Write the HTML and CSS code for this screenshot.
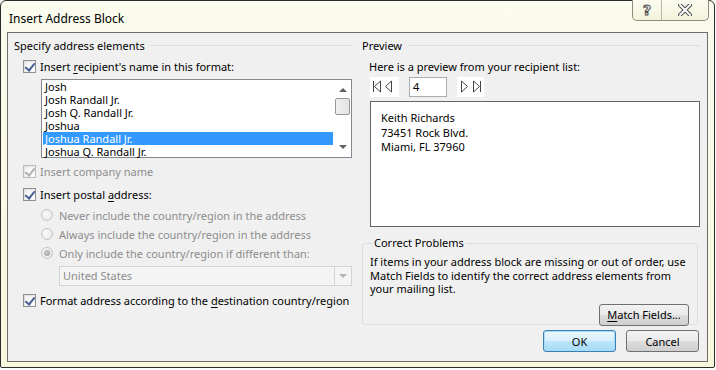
FILE: index.html
```html
<!DOCTYPE html>
<html lang="en">

<head>
    <meta charset="UTF-8">
    <title>Insert Address Block</title>
    <link rel="stylesheet" href="styles.css">
</head>

<body>
    <div class="window">
        <div class="titlebar">
            <span class="title">Insert Address Block</span>
            <div class="capBtns">
                <div class="capBtn help">?</div>
                <div class="capBtn close">
                    <svg width="14" height="12" viewBox="0 0 14 12">
                        <path d="M2 1 L12 11 M12 1 L2 11" stroke="#4a4a4a" stroke-width="4" stroke-linecap="square" />
                        <path d="M2 1 L12 11 M12 1 L2 11" stroke="#fff" stroke-width="2" stroke-linecap="square" />
                    </svg>
                </div>
            </div>
        </div>

        <div class="client">
            <section class="col left">
                <div class="grpHead"><span>Specify address elements</span><i></i></div>

                <label class="row cbRow first">
                    <span class="cb on"></span>
                    <span>Insert <u>r</u>ecipient's name in this format:</span>
                </label>

                <div class="listbox">
                    <ul class="items">
                        <li>Josh</li>
                        <li>Josh Randall Jr.</li>
                        <li>Josh Q. Randall Jr.</li>
                        <li>Joshua</li>
                        <li class="sel">Joshua Randall Jr.</li>
                        <li>Joshua Q. Randall Jr.</li>
                    </ul>
                    <div class="vscroll">
                        <span class="arrUp"></span>
                        <span class="thumb"></span>
                        <span class="arrDown"></span>
                    </div>
                </div>

                <label class="row cbRow company disabled">
                    <span class="cb on dis"></span>
                    <span>Insert company name</span>
                </label>

                <label class="row cbRow postal">
                    <span class="cb on"></span>
                    <span>Insert postal <u>a</u>ddress:</span>
                </label>

                <label class="row radioRow r1 disabled">
                    <span class="radio"></span>
                    <span>Never include the country/region in the address</span>
                </label>
                <label class="row radioRow r2 disabled">
                    <span class="radio"></span>
                    <span>Always include the country/region in the address</span>
                </label>
                <label class="row radioRow r3 disabled">
                    <span class="radio on"></span>
                    <span>Only include the country/region if different than:</span>
                </label>

                <div class="combo">
                    <span class="comboText">United States</span>
                    <span class="comboBtn"><span class="arrDown grey"></span></span>
                </div>

                <label class="row cbRow fmt">
                    <span class="cb on"></span>
                    <span>Format address according to the <u>d</u>estination country/region</span>
                </label>
            </section>

            <section class="col right">
                <div class="grpHead"><span>Preview</span><i></i></div>

                <div class="row hereText">Here is a preview from your recipient list:</div>

                <div class="nav">
                    <div class="navPair">
                        <svg width="29" height="20" viewBox="0 0 29 20">
                            <path d="M3.5 4 V15 M10.5 4 L4.5 9.5 L10.5 15 Z" fill="none" stroke="#444" />
                            <path d="M21.5 4 L15.5 9.5 L21.5 15 Z" fill="none" stroke="#444" />
                        </svg>
                    </div>
                    <div class="recInput">4</div>
                    <div class="navPair">
                        <svg width="27" height="20" viewBox="0 0 27 20">
                            <path d="M4.5 4 L10.5 9.5 L4.5 15 Z" fill="none" stroke="#444" />
                            <path d="M16.5 4 L22.5 9.5 L16.5 15 Z M23.5 4 V15" fill="none" stroke="#444" />
                        </svg>
                    </div>
                </div>

                <div class="preview">
                    <div>Keith Richards</div>
                    <div>73451 Rock Blvd.</div>
                    <div>Miami, FL 37960</div>
                </div>

                <fieldset class="problems">
                    <legend>Correct Problems</legend>
                    <p>If items in your address block are missing or out of order, use Match Fields to identify the correct address elements from your mailing list.</p>
                    <div class="btnRow">
                        <button class="btn match"><u>M</u>atch Fields...</button>
                    </div>
                </fieldset>

                <div class="btnRow dlgBtns">
                    <button class="btn ok">OK</button>
                    <button class="btn">Cancel</button>
                </div>
            </section>
        </div>
    </div>
</body>

</html>
```

FILE: styles.css
```css
* {
    box-sizing: border-box;
    margin: 0;
    padding: 0;
}

body {
    width: 716px;
    height: 370px;
    background: #fff;
    font-family: 'Noto Sans', 'Open Sans', sans-serif;
    font-size: 11px;
    color: #000;
}

u {
    text-decoration: underline;
    text-underline-offset: 2px;
}

.window {
    width: 715px;
    height: 368px;
    border: 1px solid #2b2b2b;
    border-radius: 6px 6px 2px 2px;
    background: linear-gradient(180deg, #fbfbee 0%, #f7f8dc 100%);
    padding: 0 6px 5px 6px;
    display: flex;
    flex-direction: column;
}

.titlebar {
    height: 31px;
    display: flex;
    justify-content: space-between;
    align-items: flex-start;
}

.title {
    font-size: 12px;
    margin: 9px 0 0 2px;
}

.capBtns {
    display: flex;
    height: 21px;
    margin-top: -1px;
    margin-right: -1px;
    border: 1px solid #8c8c80;
    border-top: none;
    border-radius: 0 0 5px 5px;
    background: linear-gradient(180deg, #fbfbef, #f3f4dc);
}

.capBtn {
    display: flex;
    align-items: center;
    justify-content: center;
}

.help {
    width: 29px;
    border-right: 1px solid #b5b5a8;
    font-family: 'DejaVu Sans', sans-serif;
    font-weight: bold;
    font-size: 14px;
    color: #fff;
    -webkit-text-stroke: 1px #4a4a4a;
}

.close {
    width: 46px;
}

.client {
    flex: 1;
    border: 1px solid #6d6d6d;
    background: #f0f0f0;
    display: grid;
    grid-template-columns: 338px 338px;
    column-gap: 10px;
    padding: 5px 0 0 6px;
}

.col {
    display: flex;
    flex-direction: column;
}

.grpHead {
    height: 14px;
    display: flex;
    align-items: center;
    color: #000;
}

.grpHead i {
    flex: 1;
    height: 1px;
    margin-left: 6px;
    background: #d5dfe5;
}

.row {
    display: flex;
    align-items: center;
    height: 16px;
    white-space: nowrap;
}

.disabled {
    color: #8d8d8d;
}

.cbRow {
    padding-left: 9px;
    gap: 4px;
}

.cb {
    width: 13px;
    height: 13px;
    border: 1px solid #8e8f8f;
    background: linear-gradient(135deg, #dcdcdc, #fbfbfb);
    position: relative;
    flex: none;
}

.cb::after {
    content: "";
    position: absolute;
    left: 1px;
    top: 1px;
    width: 9px;
    height: 9px;
    background: linear-gradient(135deg, #f0f0f0, #fff);
}

.cb.on::before {
    content: "";
    position: absolute;
    z-index: 1;
    left: 3px;
    top: 0px;
    width: 4px;
    height: 8px;
    border: solid #4a5f97;
    border-width: 0 2px 2px 0;
    transform: rotate(38deg);
}

.cb.dis {
    border-color: #bcbcbc;
}

.cb.dis::before {
    border-color: #b0b0b0;
}

.first {
    margin-top: 7px;
    height: 15px;
}

.listbox {
    margin: 5px 0 0 27px;
    width: 311px;
    height: 79px;
    border: 1px solid #828790;
    background: #fff;
    display: flex;
}

.items {
    list-style: none;
    flex: 1;
    padding: 0 1px;
}

.items li {
    height: 13px;
    line-height: 13px;
    padding-left: 2px;
    white-space: nowrap;
}

.items .sel {
    background: #3399ff;
    color: #fff;
}

.vscroll {
    width: 17px;
    display: flex;
    flex-direction: column;
    align-items: center;
    background: #fff;
}

.arrUp,
.arrDown {
    width: 0;
    height: 0;
    border-left: 4px solid transparent;
    border-right: 4px solid transparent;
}

.arrUp {
    margin-top: 8px;
    border-bottom: 4px solid #606060;
}

.arrDown {
    border-top: 4px solid #606060;
}

.vscroll .arrDown {
    margin-top: auto;
    margin-bottom: 8px;
}

.thumb {
    margin-top: 6px;
    width: 15px;
    height: 17px;
    border: 1px solid #979797;
    border-radius: 2px;
    background: linear-gradient(90deg, #f0f0f0, #e3e3e3);
}

.company {
    margin-top: 5px;
}

.postal {
    margin-top: 7px;
}

.radioRow {
    padding-left: 27px;
    gap: 6px;
}

.r1 {
    margin-top: 5px;
}

.r2,
.r3 {
    margin-top: 3px;
}

.radio {
    width: 12px;
    height: 12px;
    border-radius: 50%;
    border: 1px solid #c5c5c5;
    background: radial-gradient(circle at 40% 40%, #fafafa, #e3e3e3);
    display: flex;
    align-items: center;
    justify-content: center;
    flex: none;
}

.radio.on::after {
    content: "";
    width: 6px;
    height: 6px;
    border-radius: 50%;
    background: radial-gradient(circle at 40% 40%, #cfcfcf, #959595);
}

.combo {
    margin: 5px 0 0 45px;
    width: 293px;
    height: 20px;
    border: 1px solid #d4d4d4;
    background: #f4f4f4;
    display: flex;
    color: #8d8d8d;
}

.comboText {
    flex: 1;
    padding-left: 3px;
    line-height: 18px;
}

.comboBtn {
    width: 17px;
    border-left: 1px solid #d4d4d4;
    display: flex;
    align-items: center;
    justify-content: center;
}

.arrDown.grey {
    border-top-color: #b5b5b5;
}

.fmt {
    margin-top: 6px;
}

/* right column */

.hereText {
    margin-top: 7px;
    padding-left: 7px;
    height: 14px;
}

.nav {
    margin: 4px 0 0 8px;
    display: flex;
    gap: 10px;
    height: 20px;
}

.navPair {
    background: #fff;
    display: flex;
}

.recInput {
    width: 38px;
    height: 20px;
    border: 1px solid #abadb3;
    background: #fff;
    padding-left: 3px;
    line-height: 18px;
}

.preview {
    margin: 4px 0 0 8px;
    width: 330px;
    height: 126px;
    border: 1px solid #646464;
    background: #fff;
    padding: 9px 0 0 10px;
    line-height: 14.5px;
}

.problems {
    margin-top: 10px;
    width: 336px;
    height: 88px;
    border: 1px solid #d5dfe5;
    border-radius: 3px;
    padding: 0 4px 0 7px;
}

.problems legend {
    margin-left: 2px;
    padding: 0 2px;
    line-height: 12px;
}

.problems p {
    margin-top: 6px;
    line-height: 13.5px;
}

.btnRow {
    display: flex;
    justify-content: flex-end;
    gap: 10px;
}

.btn {
    font: inherit;
    width: 73px;
    height: 22px;
    border: 1px solid #707070;
    border-radius: 3px;
    background: linear-gradient(180deg, #f2f2f2 0%, #ebebeb 48%, #dddddd 52%, #cfcfcf 100%);
    color: #000;
}

.match {
    margin: 8px 4px 0 0;
    width: 90px;
}

.dlgBtns {
    margin-top: 5px;
    padding-right: 1px;
}

.ok {
    border-color: #3c7fb1;
    box-shadow: inset 0 0 0 1px #a6dcfb;
    background: linear-gradient(180deg, #eaf6fd 0%, #d9f0fc 48%, #bee6fd 52%, #a7d9f5 100%);
}
```
